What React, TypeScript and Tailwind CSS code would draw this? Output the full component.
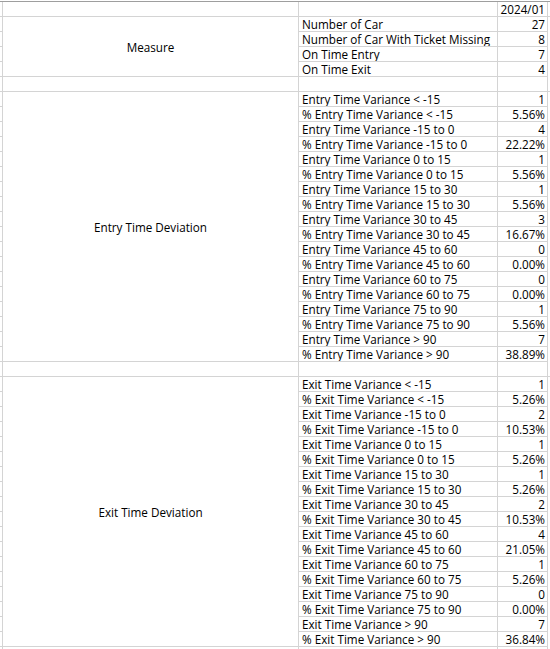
const ranges = ["< -15", "-15 to 0", "0 to 15", "15 to 30", "30 to 45", "45 to 60", "60 to 75", "75 to 90", "> 90"];

const entryVals = [
  ["1", "5.56%"],
  ["4", "22.22%"],
  ["1", "5.56%"],
  ["1", "5.56%"],
  ["3", "16.67%"],
  ["0", "0.00%"],
  ["0", "0.00%"],
  ["1", "5.56%"],
  ["7", "38.89%"],
];

const exitVals = [
  ["1", "5.26%"],
  ["2", "10.53%"],
  ["1", "5.26%"],
  ["1", "5.26%"],
  ["2", "10.53%"],
  ["4", "21.05%"],
  ["1", "5.26%"],
  ["0", "0.00%"],
  ["7", "36.84%"],
];

type Row = [string, string];

function buildRows(kind: string, vals: string[][]): Row[] {
  const rows: Row[] = [];
  ranges.forEach((r, i) => {
    rows.push([`${kind} Time Variance ${r}`, vals[i][0]]);
    rows.push([`% ${kind} Time Variance ${r}`, vals[i][1]]);
  });
  return rows;
}

const measureRows: Row[] = [
  ["Number of Car", "27"],
  ["Number of Car With Ticket Missing", "8"],
  ["On Time Entry", "7"],
  ["On Time Exit", "4"],
];

function Strip({ count }: { count: number }) {
  return (
    <div className="w-[3px] shrink-0 border-r border-[#d4d4d4] flex flex-col">
      {Array.from({ length: count }).map((_, i) => (
        <div key={i} className="h-[15px] border-b border-[#d4d4d4]" />
      ))}
    </div>
  );
}

function Section({ title, rows }: { title: string; rows: Row[] }) {
  return (
    <div className="flex">
      <Strip count={rows.length} />
      <div className="w-[296px] shrink-0 border-r border-b border-[#d4d4d4] flex items-center justify-center">
        {title}
      </div>
      <div className="flex flex-col">
        {rows.map(([label, value], i) => (
          <div key={i} className="flex h-[15px] border-b border-[#d4d4d4]">
            <div className="w-[199px] shrink-0 border-r border-[#d4d4d4] pl-[3px] whitespace-nowrap overflow-hidden">
              {label}
            </div>
            <div className="w-[50px] shrink-0 border-r border-[#d4d4d4] pr-[2px] text-right whitespace-nowrap">
              {value}
            </div>
          </div>
        ))}
      </div>
    </div>
  );
}

function BlankRow({ right }: { right?: string }) {
  return (
    <div className="flex h-[15px] border-b border-[#d4d4d4]">
      <div className="w-[3px] shrink-0 border-r border-[#d4d4d4]" />
      <div className="w-[296px] shrink-0 border-r border-[#d4d4d4]" />
      <div className="w-[199px] shrink-0 border-r border-[#d4d4d4]" />
      <div className="w-[50px] shrink-0 border-r border-[#d4d4d4] pr-[2px] text-right">{right}</div>
    </div>
  );
}

export default function App() {
  return (
    <div className="w-[550px] h-[649px] overflow-hidden bg-white text-black text-[11.7px] leading-[14px] font-['Open_Sans',Arial,sans-serif]">
      <div className="h-[2px] border-b border-[#9e9e9e]" />
      <BlankRow right="2024/01" />
      <Section title="Measure" rows={measureRows} />
      <BlankRow />
      <Section title="Entry Time Deviation" rows={buildRows("Entry", entryVals)} />
      <BlankRow />
      <Section title="Exit Time Deviation" rows={buildRows("Exit", exitVals)} />
      <BlankRow />
    </div>
  );
}
